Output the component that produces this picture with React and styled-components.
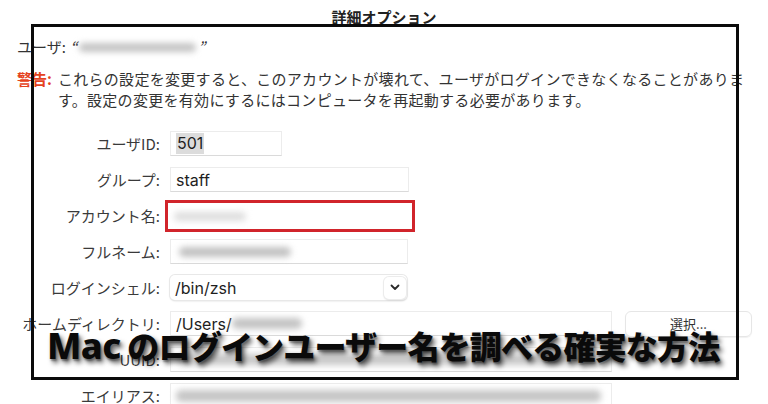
import React from "react";
import styled, { createGlobalStyle } from "styled-components";

const Global = createGlobalStyle`
  html, body { margin: 0; padding: 0; background: #fff; }
  body { font-family: "Noto Sans CJK JP", "Noto Sans", sans-serif; color: #2b2b2b; }
`;

const Page = styled.div`
  position: relative;
  width: 768px;
  height: 404px;
  overflow: hidden;
  background: #fff;
`;

const Title = styled.div`
  padding-top: 8px;
  height: 18px;
  line-height: 18px;
  font-size: 15px;
  font-weight: 700;
  text-align: center;
  color: #222;
`;

const UserLine = styled.div`
  margin: 11px 0 0 17px;
  height: 20px;
  line-height: 20px;
  font-size: 15px;
  display: flex;
  align-items: center;
  color: #333;
`;

const Quote = styled.span`
  font-style: italic;
  margin: ${(p) => (p.$open ? "0 2px 0 4px" : "0 0 0 2px")};
`;

const Blur = styled.span`
  display: inline-block;
  width: ${(p) => p.$w}px;
  height: ${(p) => p.$h || 10}px;
  margin-left: ${(p) => p.$ml || 0}px;
  background: ${(p) => p.$c || "#b9b9b9"};
  border-radius: 5px;
  filter: blur(${(p) => p.$b || 3}px);
  flex: none;
`;

const Warning = styled.div`
  margin: 11px 0 0 17px;
  display: flex;
  gap: 6px;
  font-size: 15px;
  line-height: 21px;
  letter-spacing: 0.3px;
  color: #333;
`;

const WarnLabel = styled.span`
  color: #e5421d;
  font-weight: 700;
  letter-spacing: 0;
`;

const WarnText = styled.div`
  display: flex;
  flex-direction: column;
`;

const Line = styled.span`
  white-space: nowrap;
`;

const Form = styled.div`
  margin: 21px 0 0 17px;
  display: grid;
  grid-template-columns: 143px auto;
  column-gap: 10px;
  row-gap: 11px;
  grid-auto-rows: 25px;
  align-items: center;
`;

const Label = styled.div`
  text-align: right;
  font-size: 15px;
  color: #3a3a3a;
  white-space: nowrap;
  line-height: 25px;
`;

const Field = styled.div`
  box-sizing: border-box;
  width: ${(p) => p.$w}px;
  height: 25px;
  border: 1px solid #ececec;
  border-bottom-color: #dadada;
  background: #fff;
  display: flex;
  align-items: center;
  padding-left: 5px;
  font-family: "Inter", "Noto Sans CJK JP", sans-serif;
  font-size: 16px;
  color: #1e1e1e;
`;

const Selected = styled.span`
  background: #dcdcdc;
  padding: 0 1px;
  line-height: 21px;
`;

const Highlight = styled.div`
  box-sizing: border-box;
  width: 250px;
  height: 32px;
  margin: -3px 0 -4px -5px;
  border: 3px solid #d1242b;
  display: flex;
  align-items: center;
  padding-left: 6px;
`;

const Popup = styled.div`
  box-sizing: border-box;
  width: 237px;
  height: 25px;
  border-radius: 5px;
  background: #fff;
  box-shadow: 0 0 0 1px #e8e8e8, 0 1px 2px rgba(0, 0, 0, 0.18);
  display: flex;
  align-items: center;
  justify-content: space-between;
  padding: 0 1px 0 5px;
  font-family: "Inter", "Noto Sans CJK JP", sans-serif;
  font-size: 16px;
  color: #1e1e1e;
`;

const Chevron = styled.div`
  width: 22px;
  height: 22px;
  border-radius: 5px;
  background: #fff;
  box-shadow: 0 0 0 1px #ececec, 0 1px 2px rgba(0, 0, 0, 0.2);
  display: flex;
  align-items: center;
  justify-content: center;
`;

const HomeRow = styled.div`
  display: flex;
  align-items: center;
  gap: 13px;
`;

const Button = styled.div`
  box-sizing: border-box;
  width: 127px;
  height: 26px;
  border-radius: 6px;
  border: 1px solid #e6e6e6;
  box-shadow: 0 1px 1px rgba(0, 0, 0, 0.06);
  display: flex;
  align-items: center;
  justify-content: center;
  font-size: 13px;
  color: #333;
`;

const Frame = styled.div`
  position: absolute;
  left: 31px;
  top: 24px;
  width: 708px;
  height: 356px;
  box-sizing: border-box;
  border: 3px solid #0b0b0b;
  pointer-events: none;
`;

const Caption = styled.div`
  position: absolute;
  left: 47px;
  top: 327px;
  font-size: 32px;
  line-height: 36px;
  font-weight: 900;
  letter-spacing: -0.8px;
  color: #0a0a0a;
  white-space: nowrap;
  text-shadow: 3px 4px 5px rgba(0, 0, 0, 0.6), 1px 2px 2px rgba(0, 0, 0, 0.35);
`;

const Latin = styled.span`
  font-family: "Noto Sans", "Noto Sans CJK JP", sans-serif;
  font-size: 36px;
  font-weight: 800;
  letter-spacing: -0.5px;
`;

export default function App() {
  return (
    <>
      <Global />
      <Page>
        <Title>詳細オプション</Title>
        <UserLine>
          ユーザ:<Quote $open>“</Quote>
          <Blur $w={117} $h={9} $c="#c4c4c4" />
          <Quote>”</Quote>
        </UserLine>
        <Warning>
          <WarnLabel>警告:</WarnLabel>
          <WarnText>
            <Line>これらの設定を変更すると、このアカウントが壊れて、ユーザがログインできなくなることがありま</Line>
            <Line>す。設定の変更を有効にするにはコンピュータを再起動する必要があります。</Line>
          </WarnText>
        </Warning>
        <Form>
          <Label>ユーザID:</Label>
          <Field $w={112}>
            <Selected>501</Selected>
          </Field>

          <Label>グループ:</Label>
          <Field $w={239}>staff</Field>

          <Label>アカウント名:</Label>
          <Highlight>
            <Blur $w={72} $h={9} $c="#dedede" />
          </Highlight>

          <Label>フルネーム:</Label>
          <Field $w={238}>
            <Blur $w={112} $h={10} $ml={3} $c="#c2c2c2" />
          </Field>

          <Label>ログインシェル:</Label>
          <Popup>
            /bin/zsh
            <Chevron>
              <svg width="10" height="7" viewBox="0 0 10 7">
                <path d="M1.5 1.5 L5 5 L8.5 1.5" fill="none" stroke="#2a2a2a" strokeWidth="1.8" strokeLinecap="round" strokeLinejoin="round" />
              </svg>
            </Chevron>
          </Popup>

          <Label>ホームディレクトリ:</Label>
          <HomeRow>
            <Field $w={442}>
              /Users/
              <Blur $w={70} $h={11} $c="#c4c4c4" />
            </Field>
            <Button>選択...</Button>
          </HomeRow>

          <Label>UUID:</Label>
          <Field $w={442}>
            <Blur $w={420} $h={11} $c="#c8c8c8" />
          </Field>

          <Label>エイリアス:</Label>
          <Field $w={442}>
            <Blur $w={425} $h={12} $c="#c6c6c6" />
          </Field>
        </Form>
        <Frame />
        <Caption>
          <Latin>Mac</Latin> のログインユーザー名を調べる確実な方法
        </Caption>
      </Page>
    </>
  );
}
